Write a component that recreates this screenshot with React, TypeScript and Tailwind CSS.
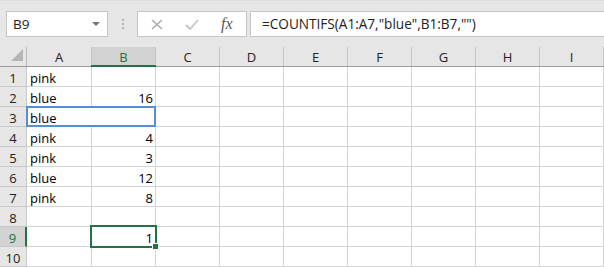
import React from "react";

const cols = ["A", "B", "C", "D", "E", "F", "G", "H", "I"];
const data: [string, string][] = [
  ["pink", ""],
  ["blue", "16"],
  ["blue", ""],
  ["pink", "4"],
  ["pink", "3"],
  ["blue", "12"],
  ["pink", "8"],
  ["", ""],
  ["", "1"],
  ["", ""],
];

export default function App() {
  return (
    <div className="relative w-[604px] h-[267px] overflow-hidden bg-white font-['Open_Sans',sans-serif] text-[#000]">
      {/* Toolbar */}
      <div className="flex h-[47px] items-start bg-[#e6e6e6] pt-[11px] border-t border-[#dcdcdc]">
        <div className="ml-[6px] mt-[-1px] flex h-[26px] w-[102px] items-center border border-[#c6c6c6] bg-white pl-[6px] pr-[6px]">
          <span className="flex-1 text-[13.5px] leading-[16px] text-[#222]">B9</span>
          <svg width="8" height="5" viewBox="0 0 8 5" className="mr-[1px]">
            <path d="M0 0 L8 0 L4 4 Z" fill="#777" />
          </svg>
        </div>
        <div className="ml-[14px] mt-[7px] flex flex-col gap-[2px]">
          <div className="h-[2px] w-[2px] bg-[#b4b4b4]" />
          <div className="h-[2px] w-[2px] bg-[#b4b4b4]" />
          <div className="h-[2px] w-[2px] bg-[#b4b4b4]" />
        </div>
        <div className="ml-[13px] mt-[-1px] flex h-[26px] w-[110px] items-center border border-[#c6c6c6] bg-white">
          <svg width="12" height="11" viewBox="0 0 12 11" className="ml-[13px]">
            <path d="M1 1 L11 10 M11 1 L1 10" stroke="#a6a6a6" strokeWidth="1.4" />
          </svg>
          <svg width="14" height="11" viewBox="0 0 14 11" className="ml-[22px]">
            <path d="M1 6 L5 10 L13 1" stroke="#c4c4c4" strokeWidth="1.8" fill="none" />
          </svg>
          <span className="ml-[22px] font-['Liberation_Serif',serif] text-[16px] italic leading-[16px] text-[#555]">
            fx
          </span>
        </div>
        <div className="ml-[3px] mt-[-1px] flex h-[26px] flex-1 items-center border-y border-l border-[#c6c6c6] bg-white pl-[11px]">
          <span className="whitespace-nowrap text-[13.6px] leading-[16px] text-[#222]">
            =COUNTIFS(A1:A7,"blue",B1:B7,"")
          </span>
        </div>
      </div>

      {/* Column header */}
      <div className="flex h-[20px] border-b border-[#9b9b9b] bg-[#e6e6e6]">
        <div className="relative w-[27px] border-r border-[#b8b8b8]">
          <svg width="12" height="12" viewBox="0 0 12 12" className="absolute left-[11px] top-[2px]">
            <path d="M12 0 L12 12 L0 12 Z" fill="#b5b5b5" />
          </svg>
        </div>
        {cols.map((c, i) => (
          <div
            key={c}
            className={`flex items-end justify-center border-r border-[#c4c4c4] pb-[1px] text-[13px] leading-[16px] ${
              i === 0 ? "w-[65px]" : "w-[64px]"
            } ${c === "B" ? "bg-[#d2d2d2] text-[#217346]" : "text-[#222]"}`}
          >
            {c}
          </div>
        ))}
      </div>

      {/* Rows */}
      {data.map((row, r) => (
        <div key={r} className="flex h-[20px]">
          <div
            className={`flex w-[27px] items-end justify-center border-b border-r border-b-[#c8c8c8] text-[13px] leading-[16px] ${
              r === 8
                ? "border-r-[#217346] border-r-2 bg-[#d2d2d2] text-[#217346]"
                : "border-r-[#c8c8c8] bg-[#e6e6e6] text-[#222]"
            }`}
          >
            {r + 1}
          </div>
          <div
            className={`flex w-[65px] items-end border-b border-r border-b-[#d4d4d4] pl-[3px] text-[13px] leading-[16px] ${
              r === 2 ? "border-r-white" : "border-r-[#d4d4d4]"
            }`}
          >
            {row[0]}
          </div>
          <div className="flex w-[64px] items-end justify-end border-b border-r border-[#d4d4d4] pr-[2px] text-[13px] leading-[16px]">
            {row[1]}
          </div>
          {cols.slice(2).map((c) => (
            <div key={c} className="w-[64px] border-b border-r border-[#d4d4d4]" />
          ))}
        </div>
      ))}

      {/* Column B header selection underline */}
      <div className="absolute left-[91px] top-[65px] h-[2px] w-[65px] bg-[#217346]" />

      {/* Blue range highlight A3:B3 */}
      <div className="absolute left-[26px] top-[106px] h-[21px] w-[130px] border-2 border-[#5690d4]" />

      {/* Active cell B9 */}
      <div className="absolute left-[90px] top-[225px] h-[23px] w-[67px] border-2 border-[#217346]" />
      <div className="absolute left-[152px] top-[243px] h-[7px] w-[7px] border border-white bg-[#217346]" />
    </div>
  );
}
